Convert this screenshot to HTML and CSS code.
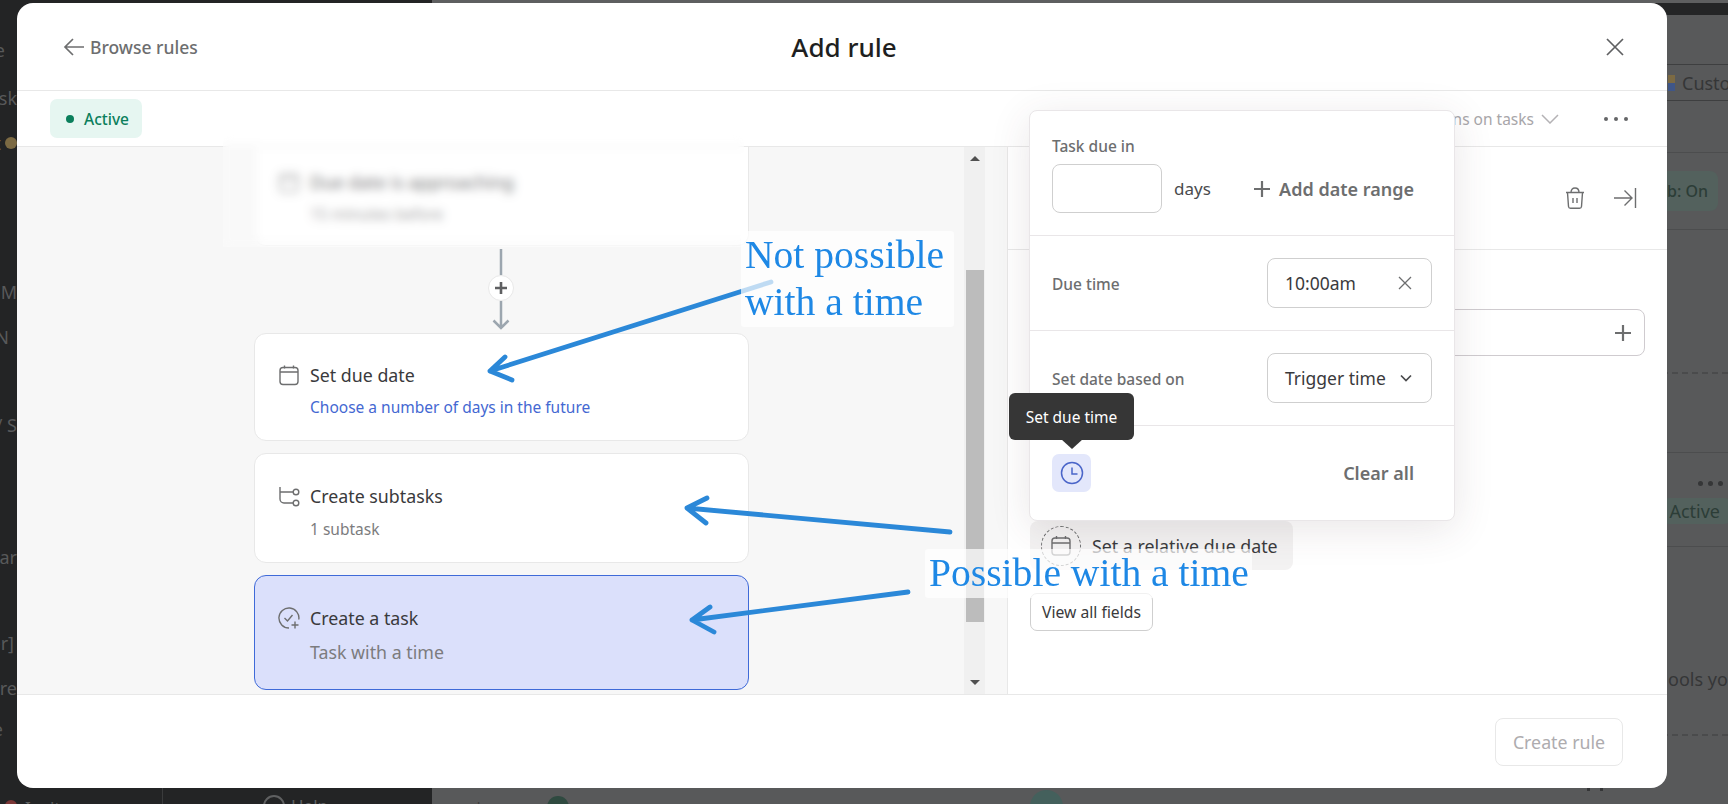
FILE: index.html
```html
<!DOCTYPE html>
<html lang="en">
<head>
<meta charset="utf-8">
<title>Add rule</title>
<link rel="stylesheet" href="styles.css">
</head>
<body>
<div class="app">
  <aside class="side">
    <div class="side-rows">
      <div class="side-row r-a">e</div>
      <div class="side-row r-b">ask</div>
      <div class="side-row r-c">t<i class="gold-dot"></i></div>
      <div class="side-row r-d">M</div>
      <div class="side-row r-e">d N</div>
      <div class="side-row r-f">/ S</div>
      <div class="side-row r-g">oar</div>
      <div class="side-row r-h">er]</div>
      <div class="side-row r-i">ure</div>
      <div class="side-row r-j">e</div>
    </div>
    <div class="side-foot">
      <div class="invite"><i class="red-dot"></i>Invite</div>
      <div class="help"><i class="help-ring"></i>Help</div>
    </div>
  </aside>
  <main class="main">
    <div class="rail">
      <div class="rl rl-1"></div>
      <div class="rl rl-2"><i class="cust-ico"></i>Custom</div>
      <div class="rl rl-3"></div>
      <div class="rl rl-4"><span class="dim-pill">b: On</span></div>
      <div class="rl rl-5"></div>
      <div class="rl rl-6"></div>
      <div class="rl rl-7"><span class="dim-dots"><i></i><i></i><i></i></span><span class="dim-pill dim-active">Active</span></div>
      <div class="rl rl-8">ools you</div>
      <div class="rl rl-9"></div>
    </div>
    <div class="main-foot">
      <span class="mf-plus">+</span>
      <i class="mf-green"></i><span class="mf-name">Sarah Gale</span>
      <i class="mf-avatar"></i><span class="mf-name2">Emily</span>
      <i class="mf-tick"></i><i class="mf-tick"></i>
    </div>
  </main>
</div>

<section class="modal">
  <header class="m-head">
    <a class="back">
      <svg class="ico-back" viewBox="0 0 22 20" width="22" height="20"><path d="M21 10H2M10 2l-8 8 8 8"/></svg>
      <span>Browse rules</span>
    </a>
    <h1 class="m-title">Add rule</h1>
    <svg class="ico-x" viewBox="0 0 20 20" width="20" height="20"><path d="M2 2l16 16M18 2L2 18"/></svg>
  </header>
  <div class="m-sub">
    <span class="badge"><i class="badge-dot"></i>Active</span>
    <div class="m-sub-right">
      <span class="actions">Actions on tasks</span>
      <svg class="ico-chev" viewBox="0 0 18 10" width="18" height="10"><path d="M1 1l8 8 8-8"/></svg>
      <span class="dots"><i></i><i></i><i></i></span>
    </div>
  </div>

  <div class="m-body">
    <div class="pane">
      <div class="flow">
        <div class="card card-top">
          <div class="card-title">
            <svg class="ico" viewBox="0 0 22 22" width="22" height="22"><rect x="2" y="3.5" width="18" height="17" rx="3"/><path d="M2 8h18"/></svg>
            <span>Due date is approaching</span>
          </div>
          <div class="card-sub sub-dim">15 minutes before</div>
        </div>
        <svg class="connector" viewBox="0 0 26 84" width="26" height="84">
          <path class="c-line" d="M13 0v26M13 52v27M5.500 71.500L13 79l7.500-7.500"/>
          <circle class="c-ring" cx="13" cy="39" r="12.500"/>
          <path class="c-plus" d="M13 33v12M7 39h12"/>
        </svg>
        <div class="card card-1">
          <div class="card-title">
            <svg class="ico" viewBox="0 0 22 22" width="22" height="22"><rect x="2" y="3.500" width="18" height="17" rx="3"/><path d="M2 8h18M6.500 1.500v3M15.500 1.500v3"/></svg>
            <span>Set due date</span>
          </div>
          <div class="card-sub sub-link">Choose a number of days in the future</div>
        </div>
        <div class="card card-2">
          <div class="card-title">
            <svg class="ico" viewBox="0 0 22 22" width="22" height="22"><path d="M2 2v12a4 4 0 0 0 4 4h9M2 7h13"/><circle cx="18" cy="7" r="2.800"/><circle cx="18" cy="18" r="2.800"/></svg>
            <span>Create subtasks</span>
          </div>
          <div class="card-sub sub-dim">1 subtask</div>
        </div>
        <div class="card card-3">
          <div class="card-title">
            <svg class="ico" viewBox="0 0 22 22" width="22" height="22"><path d="M20.800 12.500A10 10 0 1 0 11 21"/><path d="M6.500 11l3 3 5-6M17 14.500v7M13.500 18h7"/></svg>
            <span>Create a task</span>
          </div>
          <div class="card-sub sub-dim">Task with a time</div>
        </div>
      </div>
      <div class="sbar">
        <i class="sb-up"></i>
        <i class="sb-thumb"></i>
        <i class="sb-down"></i>
      </div>
    </div>

    <div class="panel">
      <div class="panel-head">
        <svg class="ico ico-trash" viewBox="0 0 22 24" width="22" height="24"><path d="M2 6.500h18M7 6.500C7 3.500 8.500 2 11 2s4 1.500 4 4.500M3.500 6.500l1 14a2 2 0 0 0 2 1.800h9a2 2 0 0 0 2-1.800l1-14M9 12v5M13 12v5"/></svg>
        <svg class="ico ico-collapse" viewBox="0 0 24 22" width="24" height="22"><path d="M1 11h18M11.500 3.500L19 11l-7.500 7.500M22.500 1v20"/></svg>
      </div>
      <div class="panel-body">
        <div class="add-field">
          <svg class="ico-plus" viewBox="0 0 18 18" width="18" height="18"><path d="M9 1v16M1 9h16"/></svg>
        </div>
        <div class="rel-row">
          <span class="rel-ring">
            <svg class="ico" viewBox="0 0 22 22" width="22" height="22"><rect x="2" y="3" width="18" height="17" rx="3"/><path d="M2 8h18M6.500 1v3M15.500 1v3"/></svg>
          </span>
          <span>Set a relative due date</span>
        </div>
        <button class="view-all">View all fields</button>
      </div>
    </div>
  </div>

  <footer class="m-foot">
    <button class="create">Create rule</button>
  </footer>

  <div class="blur-patch"></div>

  <div class="popover">
    <div class="pop-sec sec-1">
      <div class="pop-label">Task due in</div>
      <div class="due-row">
        <input class="days-input" type="text" aria-label="Days">
        <span class="days">days</span>
        <span class="add-range">
          <svg class="ico-plus" viewBox="0 0 18 18" width="18" height="18"><path d="M9 1v16M1 9h16"/></svg>
          Add date range
        </span>
      </div>
    </div>
    <div class="pop-sec sec-row">
      <div class="pop-label">Due time</div>
      <div class="select">
        <span>10:00am</span>
        <svg class="ico-x-s" viewBox="0 0 14 14" width="14" height="14"><path d="M1 1l12 12M13 1L1 13"/></svg>
      </div>
    </div>
    <div class="pop-sec sec-row">
      <div class="pop-label">Set date based on</div>
      <div class="select">
        <span>Trigger time</span>
        <svg class="ico-chev-s" viewBox="0 0 12 8" width="12" height="8"><path d="M1 1.500l5 5 5-5"/></svg>
      </div>
    </div>
    <div class="pop-sec sec-foot">
      <span class="clock-btn">
        <svg class="ico-clock" viewBox="0 0 24 24" width="24" height="24"><circle cx="12" cy="12" r="10.500"/><path d="M12 6.500V13h5.500"/></svg>
      </span>
      <span class="clear">Clear all</span>
    </div>
    <div class="tooltip">Set due time</div>
  </div>
</section>

<svg class="arrows" viewBox="0 0 1728 804" width="1728" height="804">
  <path d="M771 282L490 371M490 371L505 357M490 371L512 380"/>
  <path d="M950 532L687 508M687 508L707 498M687 508L706 523"/>
  <path d="M908 592L692 620M692 620L710 607M692 620L714 632"/>
</svg>
<div class="note note-1">Not possible<br>with a time</div>
<div class="note note-2">Possible with a time</div>
</body>
</html>
```

FILE: styles.css
```css
* { box-sizing: border-box; }
html, body { margin: 0; height: 100%; }
body {
  width: 1728px;
  height: 804px;
  overflow: hidden;
  position: relative;
  font-family: "Noto Sans", "Open Sans", sans-serif;
  background: #242526;
  color: #2e2e30;
}
i { display: block; font-style: normal; }

/* dimmed application behind the dialog */
.app { display: flex; height: 804px; }
.side { width: 432px; flex: none; background: #232425; display: flex; flex-direction: column; }
.side-rows { width: 17px; flex: 1; display: flex; flex-direction: column; }
.side-row {
  height: 24px;
  display: flex;
  align-items: center;
  justify-content: flex-end;
  white-space: nowrap;
  font-size: 18px;
  line-height: 24px;
  color: #58595a;
}
.r-a { margin-top: 38px; padding-right: 12px; }
.r-b { margin-top: 24px; }
.r-c { margin-top: 21px; color: #6b5d3f; padding-right: 0; }
.r-d { margin-top: 125px; }
.r-e { margin-top: 21px; padding-right: 8px; }
.r-f { margin-top: 64px; }
.r-g { margin-top: 108px; }
.r-h { margin-top: 62px; padding-right: 3px; }
.r-i { margin-top: 21px; }
.r-j { margin-top: 17px; padding-right: 14px; }
.gold-dot { width: 12px; height: 12px; border-radius: 50%; background: #7c6a43; margin-left: 4px; flex: none; }
.side-foot { height: 17px; display: flex; overflow: hidden; font-size: 17px; color: #5f6061; }
.invite { width: 163px; padding: 10px 0 0 5px; display: flex; gap: 8px; border-right: 1px solid #3a3b3c; line-height: 22px; height: 30px; }
.red-dot { width: 12px; height: 12px; border-radius: 50%; background: #7a3636; margin-top: 3px; }
.help { padding: 8px 0 0 100px; display: flex; gap: 6px; line-height: 22px; height: 30px; }
.help-ring { width: 22px; height: 22px; border: 2px solid #5f6061; border-radius: 50%; }

.main { flex: 1; min-width: 0; background: #58595a; display: flex; flex-direction: column; border-top: 3px solid #5e5f60; }
.rail { flex: 1; display: flex; flex-direction: column; background: #58595a; }
.rl { width: 100%; border-bottom: 1px solid #4c4d4e; display: flex; align-items: center; justify-content: flex-end; font-size: 18px; color: #353637; white-space: nowrap; overflow: hidden; }
.rl-1 { height: 12px; background: #242526; border-bottom: 0; flex: none; }
.rl-1 + .rl-2 { margin-top: 49px; border-top: 1px solid #3e3f40; }
.rl-2 { height: 37px; justify-content: flex-start; padding-left: 1236px; gap: 7px; border-bottom-color: #3e3f40; }
.rl-3 { height: 52px; }
.rl-4 { height: 77px; }
.rl-5 { height: 144px; border-bottom: 2px dashed #4a4b4c; }
.rl-6 { height: 79px; }
.rl-7 { height: 94px; flex-direction: column; align-items: flex-end; justify-content: flex-start; padding-top: 28px; }
.rl-8 { height: 189px; padding: 120px 0 0 1236px; align-items: flex-start; border-bottom: 2px dashed #4a4b4c; justify-content: flex-start; }
.rl-9 { flex: 1; border-bottom: 0; }
.cust-ico { width: 7px; height: 16px; flex: none; background: linear-gradient(#7c6a43 50%, #3f5688 50%); }
.dim-pill { background: #53615d; color: #2c3d37; font-size: 16px; padding: 9px 10px 9px 36px; border-radius: 8px; margin-right: 10px; font-weight: 500; }
.dim-active { margin-right: -4px; padding: 1px 12px 1px 8px; margin-top: 12px; font-size: 18px; font-weight: 400; }
.dim-dots { display: flex; gap: 5px; margin-right: 5px; }
.dim-dots i { width: 5px; height: 5px; border-radius: 50%; background: #353637; }
.main-foot { height: 17px; display: flex; overflow: hidden; font-size: 16px; color: #6f7071; line-height: 22px; }
.mf-plus { margin-left: 42px; padding-top: 8px; color: #3a3b3c; }
.mf-green { width: 22px; height: 22px; border-radius: 50%; background: #2f4a40; margin: 9px 0 0 64px; flex: none; }
.mf-name { margin: 12px 0 0 8px; letter-spacing: 3px; white-space: nowrap; }
.mf-avatar { width: 33px; height: 33px; border-radius: 50%; background: #44605c; margin: 3px 0 0 342px; flex: none; }
.mf-name2 { margin: 12px 0 0 6px; }
.mf-tick { width: 3px; height: 4px; background: #353637; margin-right: 10px; flex: none; }
.mf-name2 + .mf-tick { margin-left: 478px; }

/* dialog */
.modal {
  position: absolute;
  left: 17px;
  top: 3px;
  width: 1650px;
  height: 785px;
  background: #fff;
  border-radius: 16px;
  display: flex;
  flex-direction: column;
}
.m-head {
  height: 88px;
  flex: none;
  padding: 0 42px 0 46px;
  border-bottom: 1px solid #e8e8e8;
  display: grid;
  grid-template-columns: 1fr auto 1fr;
  align-items: center;
}
.back { display: flex; align-items: center; gap: 5px; font-size: 17.500px; font-weight: 500; color: #6d6e6f; }
.ico-back path { fill: none; stroke: #6d6e6f; stroke-width: 1.700; }
.m-title { margin: 0; font-size: 26px; line-height: 32px; font-weight: 500; color: #1e1f21; }
.ico-x { justify-self: end; }
.ico-x path { fill: none; stroke: #5f6062; stroke-width: 1.700; }

.m-sub {
  height: 56px;
  flex: none;
  padding: 8px 39px 8px 33px;
  border-bottom: 1px solid #e8e8e8;
  display: flex;
  align-items: flex-start;
  justify-content: space-between;
}
.badge {
  height: 39px;
  width: 92px;
  padding-left: 16px;
  display: flex;
  align-items: center;
  gap: 10px;
  background: #e6f6f1;
  border-radius: 7px;
  font-size: 15.500px;
  font-weight: 500;
  color: #0b7f5c;
}
.badge-dot { width: 8px; height: 8px; border-radius: 50%; background: #0b7f5c; }
.m-sub-right { display: flex; align-items: center; height: 39px; font-size: 15.500px; color: #a8a6a9; }
.ico-chev { margin-left: 7px; }
.ico-chev path { fill: none; stroke: #b4b2b5; stroke-width: 1.500; }
.dots { display: flex; gap: 6px; margin-left: 45px; }
.dots i { width: 4px; height: 4px; border-radius: 50%; background: #646567; }

.m-body { flex: 1; display: flex; min-height: 0; }
.pane {
  width: 991px;
  flex: none;
  display: flex;
  background: #f7f7f7;
  border-right: 1px solid #e8e8e8;
  padding-right: 22px;
  overflow: hidden;
}
.flow { flex: 1; padding-left: 237px; display: flex; flex-direction: column; align-items: flex-start; }
.card {
  width: 495px;
  flex: none;
  background: #fff;
  border: 1px solid #e8e8e8;
  border-radius: 12px;
  padding: 29px 23px 0;
}
.card-top { height: 99px; border-top: 0; border-radius: 0 0 12px 12px; padding-top: 23px; }
.card-1 { height: 108px; margin-bottom: 12px; }
.card-2 { height: 110px; margin-bottom: 12px; padding-top: 30px; }
.card-3 { height: 115px; padding-top: 30px; background: #dbe0fb; border-color: #3f6ad8; }
.card-title { display: flex; align-items: center; gap: 10px; height: 24px; font-size: 17.800px; color: #3a3a3c; }
.card-sub { margin: 9px 0 0 32px; font-size: 15.500px; line-height: 22px; }
.card-2 .card-sub { margin-top: 10px; }
.card-3 .card-sub { font-size: 17.800px; margin-top: 11px; }
.sub-link { color: #4468d2; }
.sub-dim { color: #7c7c7e; }
.ico { flex: none; }
.ico rect, .ico path, .ico circle { fill: none; stroke: #6d6e6f; stroke-width: 1.400; }
.connector { margin: 3px 0 0 234px; flex: none; }
.c-line { fill: none; stroke: #9ca6af; stroke-width: 2.500; }
.c-ring { fill: #fff; stroke: #e8e8e8; stroke-width: 1; }
.c-plus { fill: none; stroke: #5f6062; stroke-width: 2.600; }

.sbar { width: 21px; flex: none; background: #f0f0f0; display: flex; flex-direction: column; align-items: center; padding: 9px 0 6px; }
.sb-up { width: 0; height: 0; border: 5px solid transparent; border-top: 0; border-bottom: 5px solid #505050; }
.sb-down { width: 0; height: 0; border: 5px solid transparent; border-bottom: 0; border-top: 5px solid #505050; margin-top: auto; margin-bottom: 3px; }
.sb-thumb { width: 18px; height: 352px; margin-top: 109px; background: #bcbcbc; }

.panel { flex: 1; display: flex; flex-direction: column; min-width: 0; }
.panel-head { height: 103px; flex: none; display: flex; align-items: center; justify-content: flex-end; gap: 27px; padding-right: 30px; border-bottom: 1px solid #e8e8e8; }
.panel-body { flex: 1; padding: 59px 22px 0 22px; display: flex; flex-direction: column; align-items: flex-start; }
.add-field { width: 100%; height: 47px; border: 1px solid #cfcbcf; border-radius: 8px; display: flex; align-items: center; justify-content: flex-end; padding-right: 12px; }
.ico-plus path { fill: none; stroke: #6d6e6f; stroke-width: 2.200; }
.rel-row { margin-top: 165px; width: 263px; height: 49px; background: #f3f2f2; border-radius: 8px; display: flex; align-items: center; gap: 11px; padding-left: 11px; font-size: 17.800px; color: #3a3b3d; white-space: nowrap; }
.rel-ring { width: 40px; height: 40px; flex: none; border: 1px dashed #6d6e6f; border-radius: 50%; display: flex; align-items: center; justify-content: center; }
.view-all { margin-top: 23px; width: 123px; height: 38px; padding: 0; background: #fff; border: 1px solid #cfcfcf; border-radius: 7px; font: 15.700px "Noto Sans", sans-serif; color: #3a3a3c; }

.m-foot { height: 94px; flex: none; border-top: 1px solid #e8e8e8; display: flex; align-items: center; justify-content: flex-end; padding-right: 44px; }
.create { width: 128px; height: 48px; padding: 0; background: #fff; border: 1px solid #e8e8e8; border-radius: 8px; font: 17.800px "Noto Sans", sans-serif; color: #aeacaf; }

.blur-patch {
  position: absolute;
  left: 206px;
  top: 131px;
  width: 521px;
  height: 113px;
  background: rgba(255, 255, 255, 0.3);
  backdrop-filter: blur(5px);
}

.popover {
  position: absolute;
  left: 1012px;
  top: 107px;
  width: 426px;
  height: 411px;
  background: #fff;
  border: 1px solid #e9e6e8;
  border-radius: 8px;
  box-shadow: 0 8px 40px rgba(70, 50, 60, 0.12);
  display: flex;
  flex-direction: column;
}
.pop-sec { border-bottom: 1px solid #e9e6e8; padding: 0 22px; flex: none; }
.sec-1 { height: 125px; padding-top: 22px; }
.sec-row { height: 95px; display: flex; align-items: center; justify-content: space-between; }
.sec-foot { flex: 1; border-bottom: 0; display: flex; align-items: center; justify-content: space-between; padding-right: 40px; }
.pop-label { font-size: 15.500px; line-height: 24px; font-weight: 500; color: #6d6e6f; padding-top: 1px; }
.due-row { display: flex; align-items: center; margin-top: 6px; font-size: 17px; color: #4a4b4d; }
.days-input { width: 110px; height: 49px; border: 1px solid #cfcfcf; border-radius: 8px; background: #fff; margin: 0; padding: 0; }
.days { margin-left: 12px; }
.add-range { margin-left: auto; margin-right: 18px; display: flex; align-items: center; gap: 8px; font-size: 18px; font-weight: 600; color: #6d6e6f; white-space: nowrap; }
.select { width: 165px; height: 50px; border: 1px solid #cfcfcf; border-radius: 8px; padding: 0 19px 0 17px; display: flex; align-items: center; justify-content: space-between; font-size: 17.500px; color: #3a3a3c; }
.ico-x-s path { fill: none; stroke: #6d6e6f; stroke-width: 1.300; }
.ico-chev-s path { fill: none; stroke: #4a4b4d; stroke-width: 1.700; }
.clock-btn { width: 39px; height: 38px; background: #e3e7fb; border-radius: 7px; display: flex; align-items: center; justify-content: center; }
.ico-clock circle, .ico-clock path { fill: none; stroke: #4a65c9; stroke-width: 1.500; }
.clear { font-size: 18px; font-weight: 600; color: #6d6e6f; }
.tooltip {
  position: absolute;
  left: -21px;
  top: 282px;
  width: 125px;
  height: 47px;
  background: #363636;
  border-radius: 6px;
  color: #fff;
  font-size: 15.500px;
  display: flex;
  align-items: center;
  justify-content: center;
}
.tooltip::after {
  content: "";
  position: absolute;
  left: 50%;
  bottom: -9px;
  margin-left: -11px;
  border: 11px solid transparent;
  border-top: 10px solid #363636;
  border-bottom: 0;
}

/* hand-drawn annotations on top of the screenshot */
.arrows { position: absolute; left: 0; top: 0; pointer-events: none; }
.arrows path { fill: none; stroke: #2b88d8; stroke-width: 4.800; stroke-linecap: round; }
.note {
  position: absolute;
  background: rgba(255, 255, 255, 0.7);
  color: #1e88e5;
  font-family: "Liberation Serif", serif;
  font-size: 39.600px;
  line-height: 47px;
  white-space: nowrap;
  border-radius: 3px;
}
.note-1 { left: 741px; top: 231px; width: 213px; height: 96px; padding: 1px 4px; }
.note-2 { left: 925px; top: 549px; width: 327px; height: 49px; padding: 1px 4px; }
```
